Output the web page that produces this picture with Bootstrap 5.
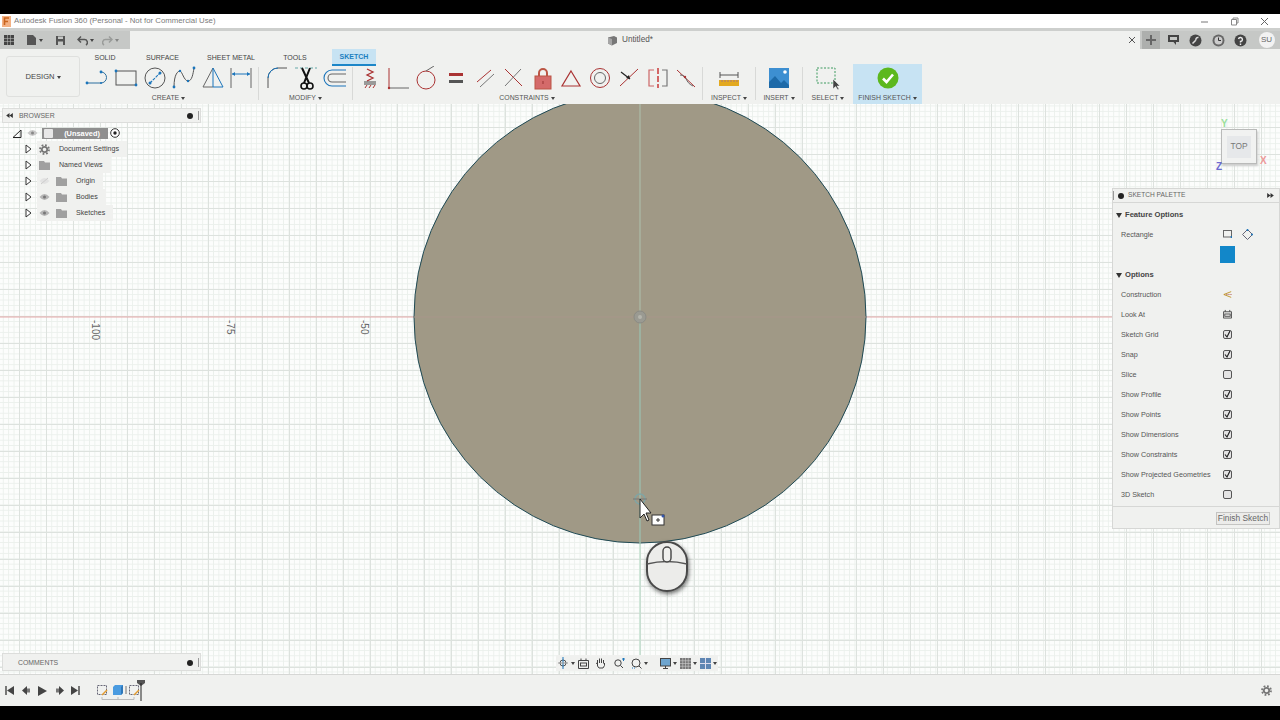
<!DOCTYPE html>
<html lang="en">
<head>
<meta charset="UTF-8">
<title>Autodesk Fusion 360</title>
<link href="https://cdn.jsdelivr.net/npm/bootstrap@5.3.3/dist/css/bootstrap.min.css" rel="stylesheet">
<style>
html, body { height: 720px; overflow: hidden; }
body { background: #000; font-family: "Liberation Sans", Arial, sans-serif; color: #555; font-size: 8px; line-height: 1; }
svg { display: block; flex: none; }
.blackbar { height: 14px; background: #000; flex: none; }
.titlebar { height: 14px; background: #fff; color: #7b7b7b; font-size: 7.8px; flex: none; padding-left: 2px; }
.titlebar .ttl { margin-left: 3px; }
.winbtn { width: 30px; }
.winbtns { margin-right: 1px; }
.strip { height: 3px; background: #cdcfcd; flex: none; }
.tabrow { height: 18px; flex: none; background: #f0f1ef; }
.tab-left { width: 130px; background: #c6c8c6; padding-left: 3px; }
.q-doc { margin-left: 11px; }
.q-save { margin-left: 12px; }
.q-undo { margin-left: 11px; }
.q-car { margin-left: 4px; }
.q-redo { margin-left: 8px; }
.tab-mid { background: #f0f1ef; color: #555; font-size: 8.2px; position: relative; padding: 1px 10px 0 0; }
.tab-mid .tabx { position: absolute; right: 4px; top: 5px; }
.tab-right { width: 140px; background: #c6c8c6; padding-left: 2px; }
.plusbtn { width: 18px; height: 18px; background: #adafad; }
.r-ico { margin-left: 9.5px; }
.r-su { margin-left: 11.500px; }
.r-chat { margin-left: 6.5px; }
.su { width: 16px; height: 16px; border-radius: 50%; background: #f2f2f2; color: #666; font-size: 8px; }
.toolbar { height: 55px; background: #f0f1ef; flex: none; }
.designbtn { width: 74px; height: 41px; margin: 7px 3px 0 6px; border: 1px solid #dfe0de; border-radius: 3px; color: #444; font-size: 7.6px; padding-top: 1px; }
.tabs { height: 15px; }
.tbtab { height: 17px; font-size: 7px; color: #444; }
.t-solid { width: 44px; }
.t-surface { width: 71px; }
.t-sheet { width: 66px; }
.t-tools { width: 62px; margin-right: 6px; }
.t-sketch { width: 44px; background: #c7e3f3; border-bottom: 2px solid #1c86c8; color: #1c7fbf; font-weight: 700; }
.groups { height: 40px; }
.grp-label { height: 14px; font-size: 6.9px; color: #555; white-space: nowrap; padding-top: 3px; }
.caret { display: inline-block; border-left: 2px solid transparent; border-right: 2px solid transparent; border-top: 3px solid #444; margin-left: 2px; vertical-align: 1px; }
.tgroup { padding-top: 2px; }
.g-create { width: 175px; }
.g-create .grp-label, .g-modify .grp-label, .g-constraints .grp-label { padding-right: 4px; }
.g-modify { width: 93px; padding-left: 4px; }
.g-constraints { width: 349px; padding-left: 3px; }
.g-inspect { width: 52px; }
.g-insert { width: 46px; }
.g-select { width: 50px; }
.g-finish { width: 69px; background: #c7e3f3; }
.tico { width: 29px; height: 24px; }
.g-constraints .tico { width: 28.75px; }
.tsep { width: 1px; margin: 3px 0 4px; background: #d8d9d7; }
.canvas { flex: 1 1 auto; position: relative; overflow: hidden; background-color: #fcfdfc;
  background-image:
    linear-gradient(90deg, #dde2de 1px, transparent 1px),
    linear-gradient(0deg, #dde2de 1px, transparent 1px),
    linear-gradient(90deg, #ebf0ec 1px, transparent 1px),
    linear-gradient(0deg, #ebf0ec 1px, transparent 1px);
  background-size: 27px 27px, 27px 27px, 5.4px 5.4px, 5.4px 5.4px;
  background-position: 19px 24px, 19px 24px, 2.8px 2.4px, 2.8px 2.4px; }
.scene { position: absolute; left: 0; top: 0; }
.panelbar { position: absolute; left: 2px; width: 199px; background: #f0f1ef; border: 1px solid #dcdddb; color: #666; font-size: 6.9px; padding: 0 1px 0 3px; }
.pb-name { padding-top: 1px; }
.pb-browser { top: 4px; height: 15px; }
.pb-browser .pb-name { margin-left: 6px; }
.pb-comments { top: 549px; height: 18px; padding-top: 1px; }
.pb-comments .pb-name { margin-left: 12px; }
.pb-dot { width: 6px; height: 6px; border-radius: 50%; background: #222; margin-left: auto; margin-right: 5px; }
.pb-grip { width: 1px; height: 9px; background: #999; }
.btree { position: absolute; left: 10px; top: 21px; }
.brow { height: 16px; position: relative; padding-left: 27px; }
.brow-in { height: 16px; background: #f0f1ef; padding: 0 8px 0 2px; font-size: 7.1px; color: #444; gap: 6px; }
.brow-arrow { position: absolute; left: 15px; top: 3px; }
.brow-root { padding-left: 2px; }
.root-eye { margin-left: 5px; }
.root-bar { margin-left: 4px; }
.root-tgt { margin-left: 2px; }
.rootbar { background: #8f8f8f; color: #fff; font-weight: 700; height: 11px; width: 66px; font-size: 7.4px; }
.rootbar-txt { padding-top: 1px; }
.rootbox { width: 9px; height: 9px; margin: 0 3px 0 2px; background: #e7e7e7; border-radius: 1px; }
.lbl-w { margin-left: 3px; padding-top: 2px; }
.palette { position: absolute; left: 1112px; top: 84px; width: 168px; height: 341px; background: #f0f1ef; border: 1px solid #d6d7d5; color: #555; font-size: 7.2px; }
.pal-head { height: 14px; border-bottom: 1px solid #d6d7d5; padding: 0 5px 0 0; color: #666; font-size: 6.6px; }
.pal-body { flex: 1 1 auto; padding: 2px 0 0 8px; }
.pal-row { height: 20px; flex: none; }
.pal-sect { height: 20px; flex: none; color: #444; font-weight: 700; font-size: 7.6px; margin-left: -5px; gap: 3px; }
.pal-sw { width: 15px; height: 17px; background: #1287c9; margin-left: 99px; margin-top: 1px; }
.pal-name { width: 102px; flex: none; }
.pal-ctl { width: 9px; flex: none; margin-bottom: 2px; }
.pal-ctl2 { margin: 0 0 2px 10px; }
.pal-foot { height: 22px; flex: none; border-top: 1px solid #d6d7d5; padding: 1px 9px 0 0; }
.fin-btn { background: #ececea; border: 1px solid #c4c4c2; color: #666; font-size: 8.4px; height: 13px; width: 54px; padding: 0; border-radius: 0; line-height: 1; }
.form-check-input.pchk { width: 9px; height: 9px; margin: 0 0 2px; border: 1px solid #555; border-radius: 2px; background-color: #e4e4e4; box-shadow: none; }
.form-check-input.pchk:checked { background-color: #e4e4e4; border-color: #555; background-size: 9px 9px;
  background-image: url("data:image/svg+xml,%3csvg xmlns='http://www.w3.org/2000/svg' viewBox='0 0 9 9'%3e%3cpath fill='none' stroke='%23222' stroke-width='1.2' d='M2 4.5 4 7 7 1'/%3e%3c/svg%3e"); }
.navbox { position: absolute; left: 556px; top: 551px; width: 162px; height: 16px; background: #f0f1ef; padding-left: 1px; }
.nv-a { margin-left: 3px; }
.nv-b { margin-left: 6px; }
.nv-d { margin-left: 8px; }
.nv-c { margin-left: 12px; }
.viewcube { position: absolute; left: 1221px; top: 25px; width: 36px; height: 35px; background: #f1f2f1; border: 1px solid #b9bab9; box-shadow: 1px 2px 2px #ccc; color: #777; font-size: 8.4px; }
.vc-in { width: 24px; height: 22px; background: #e6e8ea; }
.ax { position: absolute; font-size: 10px; font-weight: 700; }
.ax-y { left: 1221px; top: 15px; color: #9be09b; }
.ax-x { left: 1260px; top: 52px; color: #e99; }
.ax-z { left: 1216px; top: 58px; color: #6c6ad0; }
.timeline { height: 32px; flex: none; background: #f0f1ef; border-top: 1px solid #d6d7d5; padding: 0 8px 0 0; }
.tl-btns { padding-left: 5px; gap: 7.5px; margin-right: 15px; }
.tl-gear { margin-left: auto; }
</style>
</head>
<body class="d-flex flex-column">
<div class="blackbar"></div>

<div class="titlebar d-flex align-items-center">
  <svg width="9" height="11" viewBox="0 0 9 11"><rect width="9" height="11" fill="#f4b183"/><path d="M2.5 9V2H7M2.5 5.5H6" fill="none" stroke="#c8641e" stroke-width="1.6"/></svg>
  <span class="ttl">Autodesk Fusion 360 (Personal - Not for Commercial Use)</span>
  <div class="ms-auto d-flex align-items-center winbtns">
    <div class="winbtn d-flex justify-content-center"><svg width="9" height="9" viewBox="0 0 9 9"><path d="M1 5H8" stroke="#777"/></svg></div>
    <div class="winbtn d-flex justify-content-center"><svg width="9" height="9" viewBox="0 0 9 9"><path d="M1.5 2.5H6.5V8H1.5ZM3 2.5V1H8V6H6.5" fill="none" stroke="#888"/></svg></div>
    <div class="winbtn d-flex justify-content-center"><svg width="9" height="9" viewBox="0 0 9 9"><path d="M1 1 8 8M8 1 1 8" stroke="#666"/></svg></div>
  </div>
</div>
<div class="strip"></div>

<div class="tabrow d-flex">
  <div class="tab-left d-flex align-items-center">
    <svg width="12" height="12" viewBox="0 0 12 12" fill="#444"><path d="M1 1h3v3H1zM4.500 1h3v3h-3zM8 1h3v3H8zM1 4.500h3v3H1zM4.500 4.500h3v3h-3zM8 4.500h3v3H8zM1 8h3v3H1zM4.500 8h3v3h-3zM8 8h3v3H8z"/></svg>
    <svg class="q-doc" width="11" height="12" viewBox="0 0 11 12"><path d="M1 1H7L10 4V11H1Z" fill="#555"/></svg>
    <span class="caret q-car"></span>
    <svg class="q-save" width="11" height="11" viewBox="0 0 11 11"><path d="M1 1H10V10H1Z" fill="#555"/><path d="M3 1.500H8V4H3ZM3 6.500H8V10H3Z" fill="#c6c8c6"/></svg>
    <svg class="q-undo" width="11" height="11" viewBox="0 0 11 11"><path d="M4 1.500 1 4.500 4 7.500M1.500 4.500H7A3 3 0 0 1 9 10" fill="none" stroke="#555" stroke-width="1.500"/></svg>
    <span class="caret q-car"></span>
    <svg class="q-redo" width="11" height="11" viewBox="0 0 11 11"><path d="M7 1.500 10 4.500 7 7.500M9.500 4.500H4A3 3 0 0 0 2 10" fill="none" stroke="#9a9c9a" stroke-width="1.500"/></svg>
    <span class="caret q-car opacity-50"></span>
  </div>
  <div class="tab-mid flex-grow-1 d-flex align-items-center justify-content-center">
    <svg class="me-1" width="11" height="11" viewBox="0 0 11 11"><path d="M1 2.500 7 1 10 2.500V8L5 10.500 1 8.500Z" fill="#777"/><path d="M1 2.500 5 4V10.500L1 8.500Z" fill="#a5a5a5"/></svg>
    <span>Untitled*</span>
    <svg class="tabx" width="8" height="8" viewBox="0 0 8 8"><path d="M1 1 7 7M7 1 1 7" stroke="#555"/></svg>
  </div>
  <div class="tab-right d-flex align-items-center">
    <div class="plusbtn d-flex align-items-center justify-content-center"><svg width="10" height="10" viewBox="0 0 10 10"><path d="M5 0V10M0 5H10" stroke="#666" stroke-width="2"/></svg></div>
    <svg class="r-chat" width="13" height="12" viewBox="0 0 13 12"><path d="M1 1H12V8H9V11L6.500 8H1Z" fill="#444"/><path d="M3 3H10V6H3Z" fill="#c6c8c6"/></svg>
    <svg class="r-ico" width="13" height="13" viewBox="0 0 13 13"><circle cx="6.500" cy="6.500" r="6" fill="#444"/><path d="M3.500 9.500 7 6M7 6A2 2 0 0 1 9.500 3.500" stroke="#ddd" stroke-width="1.500" fill="none"/></svg>
    <svg class="r-ico" width="13" height="13" viewBox="0 0 13 13"><circle cx="6.500" cy="6.500" r="6" fill="#666"/><circle cx="6.500" cy="6.500" r="4" fill="#ccc"/><path d="M6.500 3.500V6.500H9" stroke="#333" fill="none"/></svg>
    <svg class="r-ico" width="13" height="13" viewBox="0 0 13 13"><circle cx="6.500" cy="6.500" r="6" fill="#444"/><path d="M4.500 5A2 2 0 1 1 6.500 7.500V8.500M6.500 9.500V11" stroke="#eee" stroke-width="1.400" fill="none"/></svg>
    <div class="su d-flex align-items-center justify-content-center r-su">SU</div>
  </div>
</div>

<div class="toolbar d-flex">
  <div class="designbtn d-flex align-items-center justify-content-center">DESIGN<span class="caret"></span></div>
  <div>
    <div class="tabs d-flex align-items-start text-center">
      <div class="tbtab t-solid d-flex align-items-center justify-content-center">SOLID</div>
      <div class="tbtab t-surface d-flex align-items-center justify-content-center">SURFACE</div>
      <div class="tbtab t-sheet d-flex align-items-center justify-content-center">SHEET METAL</div>
      <div class="tbtab t-tools d-flex align-items-center justify-content-center">TOOLS</div>
      <div class="tbtab t-sketch d-flex align-items-center justify-content-center">SKETCH</div>
    </div>
    <div class="groups d-flex">
      <div class="tgroup g-create">
        <div class="d-flex">
          <div class="tico"><svg width="28" height="24" viewBox="0 0 28 24"><path d="M4 17H18A5.500 5.500 0 0 0 18 6" fill="none" stroke="#2a6f9f" stroke-width="1"/><circle cx="4" cy="17" r="1.400" fill="#1b75bb"/><circle cx="18" cy="17" r="1" fill="#1b75bb"/><circle cx="18" cy="6" r="1.400" fill="#1b75bb"/></svg></div>
          <div class="tico"><svg width="28" height="24" viewBox="0 0 28 24"><rect x="4" y="5" width="20" height="14" fill="none" stroke="#555" stroke-width="1"/><circle cx="4" cy="5" r="1.400" fill="#1b75bb"/><circle cx="24" cy="19" r="1.400" fill="#1b75bb"/></svg></div>
          <div class="tico"><svg width="28" height="24" viewBox="0 0 28 24"><circle cx="14" cy="12" r="10" fill="none" stroke="#555" stroke-width="1"/><path d="M9 17 19 7" stroke="#1b75bb" stroke-width="1.100" stroke-dasharray="3 1"/><circle cx="9" cy="17" r="1.500" fill="#1b75bb"/><circle cx="19" cy="7" r="1.500" fill="#1b75bb"/></svg></div>
          <div class="tico"><svg width="28" height="24" viewBox="0 0 28 24"><path d="M4 21C4 8 8 5 10 5C12 5 14 15 18 15C22 15 23 8 24 2" fill="none" stroke="#555" stroke-width="1"/><circle cx="4" cy="21" r="1.400" fill="#1b75bb"/><circle cx="10" cy="5" r="1.200" fill="#1b75bb"/><circle cx="18" cy="15" r="1.200" fill="#1b75bb"/><circle cx="24" cy="2" r="1.400" fill="#1b75bb"/></svg></div>
          <div class="tico"><svg width="28" height="24" viewBox="0 0 28 24"><path d="M14 2 4 21H14" fill="none" stroke="#666" stroke-width="1"/><path d="M14 2 24 21H14V2" fill="none" stroke="#1b75bb" stroke-width="1"/></svg></div>
          <div class="tico"><svg width="28" height="24" viewBox="0 0 28 24"><path d="M3 2V22M23 2V22" stroke="#666" stroke-width="1"/><path d="M4 8H22" stroke="#1b75bb" stroke-width="1"/><path d="M4 8 7 6V10ZM22 8 19 6V10Z" fill="#1b75bb"/></svg></div>
        </div>
        <div class="grp-label d-flex align-items-center justify-content-center">CREATE<span class="caret"></span></div>
      </div>
      <div class="tsep"></div>
      <div class="tgroup g-modify">
        <div class="d-flex">
          <div class="tico"><svg width="28" height="24" viewBox="0 0 28 24"><path d="M5 22V12A10 10 0 0 1 15 2H24" fill="none" stroke="#555" stroke-width="1"/><path d="M5 12A10 10 0 0 1 15 2" fill="none" stroke="#1b75bb" stroke-width="1"/></svg></div>
          <div class="tico"><svg width="28" height="24" viewBox="0 0 28 24"><path d="M3 2H25" stroke="#6aa" stroke-width="1.200" stroke-dasharray="3 2"/><path d="M10 2 17 17M18 2 12 17" stroke="#111" stroke-width="2"/><circle cx="12" cy="20" r="3" fill="none" stroke="#111" stroke-width="1.600"/><circle cx="18" cy="20" r="3" fill="none" stroke="#111" stroke-width="1.600"/></svg></div>
          <div class="tico"><svg width="28" height="24" viewBox="0 0 28 24"><path d="M25 4H11A8 8 0 0 0 11 20H25" fill="none" stroke="#1b75bb" stroke-width="1.100"/><path d="M25 8H11A4 4 0 0 0 11 16H25" fill="none" stroke="#666" stroke-width="1.100"/></svg></div>
        </div>
        <div class="grp-label d-flex align-items-center justify-content-center">MODIFY<span class="caret"></span></div>
      </div>
      <div class="tsep"></div>
      <div class="tgroup g-constraints">
        <div class="d-flex">
          <div class="tico"><svg width="28" height="24" viewBox="0 0 28 24"><path d="M11 3 17 6 11 9 17 12 11 15" fill="none" stroke="#a33" stroke-width="1.300"/><path d="M8 16H20M8 18H20" stroke="#444"/><path d="M9 22 11 19M13 22 15 19M17 22 19 19" stroke="#a33"/></svg></div>
          <div class="tico"><svg width="28" height="24" viewBox="0 0 28 24"><path d="M4 2V22" stroke="#a33"/><path d="M4 22H24" stroke="#666"/><circle cx="4" cy="22" r="1.200" fill="#a33"/></svg></div>
          <div class="tico"><svg width="28" height="24" viewBox="0 0 28 24"><circle cx="12" cy="14" r="9" fill="none" stroke="#a33"/><path d="M12 5 20 0" stroke="#666"/></svg></div>
          <div class="tico"><svg width="28" height="24" viewBox="0 0 28 24"><path d="M7 7H21V10H7Z" fill="#a33"/><path d="M7 14H21V17H7Z" fill="#555"/></svg></div>
          <div class="tico"><svg width="28" height="24" viewBox="0 0 28 24"><path d="M6 16 20 4" stroke="#a33"/><path d="M9 21 23 8" stroke="#777"/></svg></div>
          <div class="tico"><svg width="28" height="24" viewBox="0 0 28 24"><path d="M5 3 22 20" stroke="#a33"/><path d="M5 20 21 3" stroke="#777"/></svg></div>
          <div class="tico"><svg width="28" height="24" viewBox="0 0 28 24"><path d="M10 11V7A4 4 0 0 1 18 7V11" fill="none" stroke="#b54" stroke-width="2"/><rect x="6" y="10" width="16" height="13" fill="#d46a6a" stroke="#b54"/><path d="M14 15V18" stroke="#933"/></svg></div>
          <div class="tico"><svg width="28" height="24" viewBox="0 0 28 24"><path d="M14 5 23 20H5Z" fill="none" stroke="#a33" stroke-width="1.200"/></svg></div>
          <div class="tico"><svg width="28" height="24" viewBox="0 0 28 24"><circle cx="14" cy="12" r="9.500" fill="none" stroke="#a33"/><circle cx="14" cy="12" r="5.500" fill="none" stroke="#666"/></svg></div>
          <div class="tico"><svg width="28" height="24" viewBox="0 0 28 24"><path d="M5 20 23 3" stroke="#a33"/><path d="M6 6 15 13" stroke="#222" stroke-width="1.200"/><path d="M15 13 11 12 14 9Z" fill="#222"/></svg></div>
          <div class="tico"><svg width="28" height="24" viewBox="0 0 28 24"><path d="M10 4H5V20H10" fill="none" stroke="#c66" stroke-width="1.200"/><path d="M18 4H23V20H18" fill="none" stroke="#777" stroke-width="1.200"/><path d="M14 2V22" stroke="#c44" stroke-width="1.600" stroke-dasharray="6 2"/></svg></div>
          <div class="tico"><svg width="28" height="24" viewBox="0 0 28 24"><path d="M5 4 23 21" stroke="#a33"/><path d="M8 9C16 9 12 16 21 20" fill="none" stroke="#666"/><circle cx="13" cy="11" r="1.200" fill="#a33"/></svg></div>
        </div>
        <div class="grp-label d-flex align-items-center justify-content-center">CONSTRAINTS<span class="caret"></span></div>
      </div>
      <div class="tsep"></div>
      <div class="tgroup g-inspect">
        <div class="d-flex justify-content-center"><svg width="28" height="24" viewBox="0 0 28 24"><path d="M5 6V12M23 6V12" stroke="#555"/><path d="M5 9H23" stroke="#555"/><rect x="4" y="14" width="20" height="6" fill="#e3a91f"/><path d="M7 14V16M10 14V16M13 14V16M16 14V16M19 14V16M22 14V16" stroke="#a77"/></svg></div>
        <div class="grp-label d-flex align-items-center justify-content-center">INSPECT<span class="caret"></span></div>
      </div>
      <div class="tsep"></div>
      <div class="tgroup g-insert">
        <div class="d-flex justify-content-center"><svg width="24" height="24" viewBox="0 0 24 24"><rect x="2" y="2" width="20" height="20" fill="#3d8fd1"/><path d="M2 22V16L8 10 14 17 17 14 22 19V22Z" fill="#1d6aa8"/><circle cx="18" cy="6" r="1.800" fill="#fff"/></svg></div>
        <div class="grp-label d-flex align-items-center justify-content-center">INSERT<span class="caret"></span></div>
      </div>
      <div class="tsep"></div>
      <div class="tgroup g-select">
        <div class="d-flex justify-content-center"><svg width="28" height="24" viewBox="0 0 28 24"><rect x="3" y="2" width="18" height="15" fill="none" stroke="#3c9a5f" stroke-dasharray="2 1.500"/><path d="M19 13V23L21.500 20.500 24 24 25 23 23 20H26Z" fill="#444" stroke="#fff" stroke-width=".5"/></svg></div>
        <div class="grp-label d-flex align-items-center justify-content-center">SELECT<span class="caret"></span></div>
      </div>
      <div class="tgroup g-finish">
        <div class="d-flex justify-content-center"><svg width="24" height="24" viewBox="0 0 24 24"><circle cx="12" cy="12" r="10.500" fill="#5cb81e"/><path d="M7 12.500 10.500 16 17 8.500" fill="none" stroke="#fff" stroke-width="2.600"/></svg></div>
        <div class="grp-label d-flex align-items-center justify-content-center">FINISH SKETCH<span class="caret"></span></div>
      </div>
    </div>
  </div>
</div>

<div class="canvas">
  <svg class="scene" width="1280" height="570" viewBox="0 0 1280 570">
    <path d="M0 213H1112" stroke="#e6a9a9" stroke-width="1"/>
    <circle cx="640" cy="213" r="226" fill="#a09986" stroke="#1f4a55" stroke-width="1"/>
    <path d="M414 213H866" stroke="#a8968a" stroke-width="1"/>
    <path d="M640 0V551" stroke="#b5dcc5" stroke-width="1"/>
    <path d="M640 0V213" stroke="#a4a08e" stroke-width="1"/>
    <path d="M640 213V439" stroke="#8fa89a" stroke-width="1"/>
    <circle cx="640" cy="213" r="6" fill="#9a9a92" stroke="#8b8b84"/>
    <circle cx="640" cy="213" r="2" fill="#b5b5ad"/>
    <g font-family="Liberation Sans, Arial, sans-serif" font-size="10" fill="#666">
      <text transform="translate(92 216) rotate(90)">-100</text>
      <text transform="translate(227 216) rotate(90)">-75</text>
      <text transform="translate(361 216) rotate(90)">-50</text>
    </g>
    <!-- crosshair + cursor -->
    <circle cx="640" cy="395" r="5" fill="none" stroke="#7fa5a5" stroke-width="1.500"/>
    <path d="M633 395H647" stroke="#777"/>
    <path d="M640 395V414L644 410 647 417 649 416 646 409H651Z" fill="#fff" stroke="#222" stroke-width="1"/>
    <rect x="652" y="411" width="12" height="10" fill="#fff" stroke="#333" stroke-width="1"/>
    <path d="M656 416H660M658 414V418" stroke="#333"/>
    <circle cx="663" cy="412" r="1.500" fill="#35a"/>
    <!-- mouse hint -->
    <defs><filter id="msh" x="-30%" y="-30%" width="160%" height="160%"><feDropShadow dx="1" dy="2" stdDeviation="2" flood-color="#000" flood-opacity=".55"/></filter></defs>
    <rect x="647" y="438" width="40" height="49" rx="20" fill="#ececea" stroke="#4a4a4a" stroke-width="2" filter="url(#msh)"/>
    <path d="M647 460Q667 455 687 460" fill="none" stroke="#555" stroke-width="1.300"/>
    <rect x="663" y="443" width="8" height="15" rx="4" fill="#f0f0ee" stroke="#444" stroke-width="1.400"/>
  </svg>

  <div class="panelbar pb-browser d-flex align-items-center">
    <svg width="7" height="5" viewBox="0 0 8 6"><path d="M4 0V6L0 3ZM8 0V6L4 3Z" fill="#333"/></svg>
    <span class="pb-name">BROWSER</span>
    <span class="pb-dot"></span><span class="pb-grip"></span>
  </div>

  <div class="btree">
    <div class="brow brow-root d-flex align-items-center">
      <svg width="10" height="9" viewBox="0 0 10 9"><path d="M1 8.500H9V1Z" fill="none" stroke="#222"/></svg>
      <svg class="root-eye" width="11" height="8" viewBox="0 0 11 8"><path d="M.5 4Q5.500-2 10.500 4 5.500 10 .500 4Z" fill="#c8c8c8"/><circle cx="5.500" cy="4" r="1.500" fill="#888"/></svg>
      <div class="rootbar d-flex align-items-center root-bar"><span class="rootbox"></span><span class="rootbar-txt flex-grow-1 text-center">(Unsaved)</span></div>
      <svg class="root-tgt" width="10" height="10" viewBox="0 0 10 10"><circle cx="5" cy="5" r="4.300" fill="#fff" stroke="#333"/><circle cx="5" cy="5" r="1.700" fill="#222"/></svg>
    </div>
    <div class="brow d-flex">
      <svg class="brow-arrow" width="7" height="10" viewBox="0 0 7 10"><path d="M1 1 6 5 1 9Z" fill="#fff" stroke="#333" stroke-width="1"/></svg>
      <div class="brow-in d-flex align-items-center"><svg width="11" height="11" viewBox="0 0 11 11"><circle cx="5.500" cy="5.500" r="2.700" fill="none" stroke="#777" stroke-width="1.800"/><circle cx="5.500" cy="5.500" r="4.500" fill="none" stroke="#777" stroke-width="1.800" stroke-dasharray="1.770 1.770"/></svg><span class="lbl-w">Document Settings</span></div>
    </div>
    <div class="brow d-flex">
      <svg class="brow-arrow" width="7" height="10" viewBox="0 0 7 10"><path d="M1 1 6 5 1 9Z" fill="#fff" stroke="#333" stroke-width="1"/></svg>
      <div class="brow-in d-flex align-items-center"><svg width="11" height="9" viewBox="0 0 11 9"><path d="M0 0H5L6 1.500H11V9H0Z" fill="#a0a0a0"/></svg><span class="lbl-w">Named Views</span></div>
    </div>
    <div class="brow d-flex">
      <svg class="brow-arrow" width="7" height="10" viewBox="0 0 7 10"><path d="M1 1 6 5 1 9Z" fill="#fff" stroke="#333" stroke-width="1"/></svg>
      <div class="brow-in d-flex align-items-center"><svg width="11" height="8" viewBox="0 0 11 8"><path d="M.5 4Q5.500-2 10.500 4 5.500 10 .500 4Z" fill="#e2e2e2"/><path d="M2 7 9 1" stroke="#ccc"/></svg><svg width="11" height="9" viewBox="0 0 11 9"><path d="M0 0H5L6 1.500H11V9H0Z" fill="#a0a0a0"/></svg><span class="lbl-w">Origin</span></div>
    </div>
    <div class="brow d-flex">
      <svg class="brow-arrow" width="7" height="10" viewBox="0 0 7 10"><path d="M1 1 6 5 1 9Z" fill="#fff" stroke="#333" stroke-width="1"/></svg>
      <div class="brow-in d-flex align-items-center"><svg width="11" height="8" viewBox="0 0 11 8"><path d="M.5 4Q5.500-2 10.500 4 5.500 10 .500 4Z" fill="#b5b5b5"/><circle cx="5.500" cy="4" r="1.500" fill="#777"/></svg><svg width="11" height="9" viewBox="0 0 11 9"><path d="M0 0H5L6 1.500H11V9H0Z" fill="#a0a0a0"/></svg><span class="lbl-w">Bodies</span></div>
    </div>
    <div class="brow d-flex">
      <svg class="brow-arrow" width="7" height="10" viewBox="0 0 7 10"><path d="M1 1 6 5 1 9Z" fill="#fff" stroke="#333" stroke-width="1"/></svg>
      <div class="brow-in d-flex align-items-center"><svg width="11" height="8" viewBox="0 0 11 8"><path d="M.5 4Q5.500-2 10.500 4 5.500 10 .500 4Z" fill="#b5b5b5"/><circle cx="5.500" cy="4" r="1.500" fill="#777"/></svg><svg width="11" height="9" viewBox="0 0 11 9"><path d="M0 0H5L6 1.500H11V9H0Z" fill="#a0a0a0"/></svg><span class="lbl-w">Sketches</span></div>
    </div>
  </div>

  <div class="ax ax-y">Y</div>
  <div class="viewcube d-flex align-items-center justify-content-center"><div class="vc-in d-flex align-items-center justify-content-center">TOP</div></div>
  <div class="ax ax-x">X</div>
  <div class="ax ax-z">Z</div>

  <div class="palette d-flex flex-column">
    <div class="pal-head d-flex align-items-center">
      <span class="pb-grip me-1"></span><span class="pb-dot ms-0 me-1"></span><span>SKETCH PALETTE</span>
      <svg class="ms-auto" width="7" height="5" viewBox="0 0 8 6"><path d="M0 0V6L4 3ZM4 0V6L8 3Z" fill="#333"/></svg>
    </div>
    <div class="pal-body d-flex flex-column">
      <div class="pal-sect d-flex align-items-center"><svg width="6" height="5" viewBox="0 0 6 5"><path d="M0 0H6L3 5Z" fill="#333"/></svg>Feature Options</div>
      <div class="pal-row d-flex align-items-center"><span class="pal-name">Rectangle</span>
        <svg class="pal-ctl" width="9" height="8" viewBox="0 0 9 8"><rect x=".5" y=".5" width="8" height="6.500" fill="none" stroke="#666"/><circle cx="8.500" cy="7" r="1" fill="#1b75bb"/></svg>
        <svg class="pal-ctl2" width="11" height="11" viewBox="0 0 11 11"><path d="M5.500 .5 10.500 5.500 5.500 10.500 .5 5.500Z" fill="none" stroke="#667"/><circle cx="5.500" cy="1" r="1" fill="#1b75bb"/><circle cx="10" cy="5.500" r="1" fill="#1b75bb"/></svg>
      </div>
      <div class="pal-row"><div class="pal-sw"></div></div>
      <div class="pal-sect d-flex align-items-center"><svg width="6" height="5" viewBox="0 0 6 5"><path d="M0 0H6L3 5Z" fill="#333"/></svg>Options</div>
      <div class="pal-row d-flex align-items-center"><span class="pal-name">Construction</span><svg class="pal-ctl" width="11" height="9" viewBox="0 0 11 9"><path d="M10 1 1 4.500 10 8" fill="none" stroke="#b8860b"/><path d="M4 4.500H11" stroke="#a55" stroke-dasharray="1.500 1"/></svg></div>
      <div class="pal-row d-flex align-items-center"><span class="pal-name">Look At</span><svg class="pal-ctl" width="10" height="10" viewBox="0 0 10 10"><path d="M.5 2.500H9.500V9.500H.5ZM2.500 .5V2.500M7.500 .5V2.500" fill="none" stroke="#444"/><rect x="2" y="5" width="6" height="2.500" fill="none" stroke="#444"/></svg></div>
      <div class="pal-row d-flex align-items-center"><span class="pal-name">Sketch Grid</span><input class="form-check-input pchk" type="checkbox" checked aria-label="Sketch Grid"></div>
      <div class="pal-row d-flex align-items-center"><span class="pal-name">Snap</span><input class="form-check-input pchk" type="checkbox" checked aria-label="Snap"></div>
      <div class="pal-row d-flex align-items-center"><span class="pal-name">Slice</span><input class="form-check-input pchk" type="checkbox" aria-label="Slice"></div>
      <div class="pal-row d-flex align-items-center"><span class="pal-name">Show Profile</span><input class="form-check-input pchk" type="checkbox" checked aria-label="Show Profile"></div>
      <div class="pal-row d-flex align-items-center"><span class="pal-name">Show Points</span><input class="form-check-input pchk" type="checkbox" checked aria-label="Show Points"></div>
      <div class="pal-row d-flex align-items-center"><span class="pal-name">Show Dimensions</span><input class="form-check-input pchk" type="checkbox" checked aria-label="Show Dimensions"></div>
      <div class="pal-row d-flex align-items-center"><span class="pal-name">Show Constraints</span><input class="form-check-input pchk" type="checkbox" checked aria-label="Show Constraints"></div>
      <div class="pal-row d-flex align-items-center"><span class="pal-name">Show Projected Geometries</span><input class="form-check-input pchk" type="checkbox" checked aria-label="Show Projected Geometries"></div>
      <div class="pal-row d-flex align-items-center"><span class="pal-name">3D Sketch</span><input class="form-check-input pchk" type="checkbox" aria-label="3D Sketch"></div>
    </div>
    <div class="pal-foot d-flex align-items-center justify-content-end"><button type="button" class="btn fin-btn">Finish Sketch</button></div>
  </div>

  <div class="panelbar pb-comments d-flex align-items-center">
    <span class="pb-name">COMMENTS</span>
    <span class="pb-dot"></span><span class="pb-grip"></span>
  </div>

  <div class="navbox d-flex align-items-center">
    <svg width="12" height="12" viewBox="0 0 12 12"><circle cx="6" cy="6" r="3" fill="none" stroke="#555"/><path d="M6 0V12" stroke="#1b75bb"/><path d="M1 6H11" stroke="#999"/></svg><span class="caret"></span>
    <svg class="nv-a" width="11" height="11" viewBox="0 0 11 11"><path d="M.5 2.500H10.500V10.500H.5ZM3 .5V2.500M8 .5V2.500" fill="none" stroke="#444"/><rect x="2.500" y="5" width="6" height="3" fill="none" stroke="#444"/></svg>
    <svg class="nv-b" width="11" height="12" viewBox="0 0 11 12"><path d="M2.500 7V3M4.500 6V1.500M6.500 6V1.500M8.500 6.500V3M2.500 7 1 6M2.500 7V9L4 11H8L9.500 8.500V6" fill="none" stroke="#444"/></svg>
    <svg class="nv-d" width="11" height="11" viewBox="0 0 11 11"><circle cx="4" cy="5" r="3.200" fill="none" stroke="#444"/><path d="M6.500 7.500 9 10" stroke="#444"/><path d="M8 1H11M9.500 0V3" stroke="#1b75bb"/></svg>
    <svg class="nv-b" width="11" height="11" viewBox="0 0 11 11"><circle cx="5" cy="5" r="4" fill="none" stroke="#444"/><path d="M8 8 10.500 10.500" stroke="#444"/><path d="M1 10H5" stroke="#1b75bb" stroke-dasharray="1 1"/></svg><span class="caret"></span>
    <svg class="nv-c" width="11" height="11" viewBox="0 0 11 11"><rect x=".5" y=".5" width="10" height="7.500" fill="#6ea5cf" stroke="#444"/><path d="M3 10.500H8M5.500 8V10" stroke="#444"/></svg><span class="caret"></span>
    <svg class="nv-a" width="11" height="11" viewBox="0 0 11 11"><rect width="11" height="11" fill="#777"/><path d="M2.750 0V11M5.500 0V11M8.250 0V11M0 2.750H11M0 5.500H11M0 8.250H11" stroke="#ccc" stroke-width=".6"/></svg><span class="caret"></span>
    <svg class="nv-a" width="11" height="11" viewBox="0 0 11 11"><rect width="11" height="11" fill="#5f86b3"/><path d="M5.500 0V11M0 5.500H11" stroke="#dde" stroke-width="1"/></svg><span class="caret"></span>
  </div>
</div>

<div class="timeline d-flex align-items-center">
  <div class="tl-btns d-flex align-items-center">
    <svg width="9" height="9" viewBox="0 0 9 9"><path d="M1 0V9" stroke="#444" stroke-width="1.400"/><path d="M9 0V9L2 4.500Z" fill="#444"/></svg>
    <svg width="9" height="9" viewBox="0 0 9 9"><path d="M5 0V9L0 4.500Z" fill="#444"/><rect x="5" y="2.500" width="3" height="4" fill="#777"/></svg>
    <svg width="9" height="10" viewBox="0 0 9 10"><path d="M0 0V10L9 5Z" fill="#444"/></svg>
    <svg width="9" height="9" viewBox="0 0 9 9"><path d="M4 0V9L9 4.500Z" fill="#444"/><rect x="1" y="2.500" width="3" height="4" fill="#777"/></svg>
    <svg width="9" height="9" viewBox="0 0 9 9"><path d="M8 0V9" stroke="#444" stroke-width="1.400"/><path d="M0 0V9L7 4.500Z" fill="#444"/></svg>
  </div>
  <svg width="52" height="22" viewBox="0 0 52 22">
    <rect x="2.500" y="5.500" width="9" height="9" fill="none" stroke="#667" stroke-dasharray="2 1"/><path d="M7 15 12 10" stroke="#e39b2d" stroke-width="1.500"/>
    <path d="M18 7 20 5H28V13L26 15H18Z" fill="#4a9be0"/><path d="M28 5V13L26 15V7Z" fill="#2f77b8"/><path d="M31 6V14" stroke="#777"/>
    <rect x="34.500" y="5.500" width="9" height="9" fill="none" stroke="#667" stroke-dasharray="2 1"/><path d="M39 15 44 10" stroke="#e39b2d" stroke-width="1.500"/>
    <path d="M7 17V19.500H39V17M23 17V19.500" fill="none" stroke="#bbb"/>
    <path d="M42 0H50V3L46 6 42 3Z" fill="#555"/><path d="M46 3V21" stroke="#222" stroke-width="1"/>
  </svg>
  <svg class="tl-gear" width="11" height="11" viewBox="0 0 11 11"><circle cx="5.500" cy="5.500" r="2.700" fill="none" stroke="#777" stroke-width="1.800"/><circle cx="5.500" cy="5.500" r="4.500" fill="none" stroke="#777" stroke-width="1.800" stroke-dasharray="1.770 1.770"/></svg>
</div>
<div class="blackbar"></div>
<script src="https://cdn.jsdelivr.net/npm/bootstrap@5.3.3/dist/js/bootstrap.bundle.min.js"></script>
</body>
</html>
